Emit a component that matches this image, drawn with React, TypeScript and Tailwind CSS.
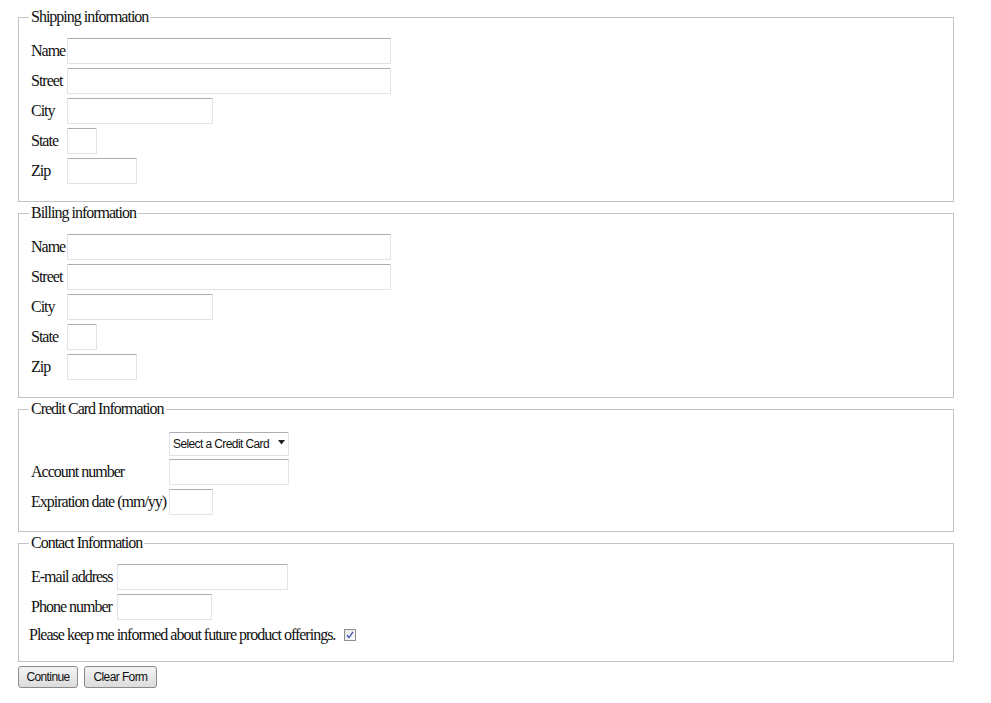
import React from "react";

const serif = "text-[16px] tracking-[-1px]";
const sans = "font-['Liberation_Sans'] text-[12px] tracking-[-0.6px]";
const inputCls =
  "h-[26px] bg-white border border-[#dfe4ea] border-t-[#abadb3] rounded-[1px] outline-none px-[2px]";

function Row({ label, labelW, inputW }: { label: string; labelW: string; inputW: string }) {
  return (
    <div className="flex items-center h-[26px]">
      <span className={`${labelW} ${serif} leading-[18px] whitespace-nowrap`}>{label}</span>
      <input type="text" className={`${inputCls} ${inputW}`} />
    </div>
  );
}

function Section({ title, children, pb }: { title: string; children: React.ReactNode; pb: string }) {
  return (
    <fieldset className={`w-[936px] border border-[#c3c3c3] px-[12px] pt-[12px] ${pb} mb-[2px]`}>
      <legend className={`${serif} leading-[18px] px-[2px] -ml-[2px]`}>{title}</legend>
      {children}
    </fieldset>
  );
}

function Address({ title }: { title: string }) {
  return (
    <Section title={title} pb="pb-[17px]">
      <div className="flex flex-col gap-[4px]">
        <Row label="Name" labelW="w-[36px]" inputW="w-[324px]" />
        <Row label="Street" labelW="w-[36px]" inputW="w-[324px]" />
        <Row label="City" labelW="w-[36px]" inputW="w-[146px]" />
        <Row label="State" labelW="w-[36px]" inputW="w-[30px]" />
        <Row label="Zip" labelW="w-[36px]" inputW="w-[70px]" />
      </div>
    </Section>
  );
}

function Button({ children, w }: { children: React.ReactNode; w: string }) {
  return (
    <button
      type="button"
      className={`${sans} ${w} h-[22px] border border-[#8a8a8a] rounded-[3px] bg-gradient-to-b from-[#f4f4f4] to-[#dcdcdc] leading-none`}
    >
      {children}
    </button>
  );
}

export default function App() {
  return (
    <div className="font-['Liberation_Serif'] text-[#111] min-h-screen bg-white pt-[8px] pl-[18px]">
      <form>
        <Address title="Shipping information" />
        <Address title="Billing information" />

        <Section title="Credit Card Information" pb="pb-[16px]">
          <div className="flex flex-col gap-[4px]">
            <div className="flex items-center h-[25px]">
              <div className="w-[138px]" />
              <div className="relative w-[120px] h-[24px]">
                <select
                  className={`${sans} appearance-none w-full h-full bg-white border border-[#dfe4ea] border-t-[#abadb3] rounded-[1px] pl-[3px] outline-none`}
                >
                  <option>Select a Credit Card</option>
                </select>
                <svg
                  className="absolute right-[4px] top-[9px] pointer-events-none"
                  width="7"
                  height="5"
                  viewBox="0 0 7 5"
                >
                  <path d="M0 0 H7 L3.5 4.5 Z" fill="#222" />
                </svg>
              </div>
            </div>
            <Row label="Account number" labelW="w-[138px]" inputW="w-[120px]" />
            <Row label="Expiration date (mm/yy)" labelW="w-[138px]" inputW="w-[44px]" />
          </div>
        </Section>

        <Section title="Contact Information" pb="pb-[15px]">
          <div className="flex flex-col gap-[4px]">
            <Row label="E-mail address" labelW="w-[86px]" inputW="w-[171px]" />
            <Row label="Phone number" labelW="w-[86px]" inputW="w-[95px]" />
            <div className="flex items-center h-[22px] -ml-[2px]">
              <span className={`${serif} leading-[18px] whitespace-nowrap`}>
                Please keep me informed about future product offerings.
              </span>
              <span className="ml-[9px] w-[12px] h-[12px] border border-[#8e8f8f] bg-gradient-to-br from-[#e6e6e6] to-[#fafafa] flex items-center justify-center">
                <svg width="8" height="8" viewBox="0 0 8 8">
                  <path d="M1 4.2 L3 6.5 L7 0.8" fill="none" stroke="#3a4fb0" strokeWidth="1.3" />
                </svg>
              </span>
            </div>
          </div>
        </Section>

        <div className="flex gap-[6px] mt-[4px]">
          <Button w="w-[60px]">Continue</Button>
          <Button w="w-[73px]">Clear Form</Button>
        </div>
      </form>
    </div>
  );
}
